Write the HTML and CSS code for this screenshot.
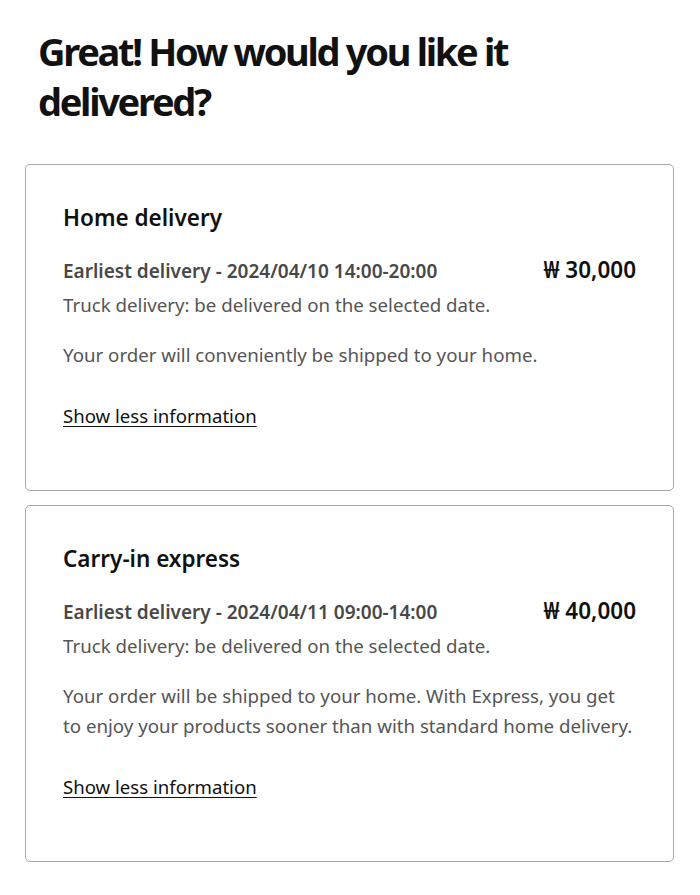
FILE: index.html
```html
<!DOCTYPE html>
<html>
<head>
<meta charset="utf-8">
<link rel="stylesheet" href="styles.css">
</head>
<body>
<main class="page">
  <h1 class="title">Great! How would you like it delivered?</h1>
  <section class="card">
    <h2 class="card-title">Home delivery</h2>
    <div class="row">
      <div class="earliest">Earliest delivery - 2024/04/10 14:00-20:00</div>
      <div class="price">₩ 30,000</div>
    </div>
    <p class="sub">Truck delivery: be delivered on the selected date.</p>
    <p class="desc">Your order will conveniently be shipped to your home.</p>
    <a class="link" href="#">Show less information</a>
  </section>
  <section class="card">
    <h2 class="card-title">Carry-in express</h2>
    <div class="row">
      <div class="earliest">Earliest delivery - 2024/04/11 09:00-14:00</div>
      <div class="price">₩ 40,000</div>
    </div>
    <p class="sub">Truck delivery: be delivered on the selected date.</p>
    <p class="desc">Your order will be shipped to your home. With Express, you get to enjoy your products sooner than with standard home delivery.</p>
    <a class="link" href="#">Show less information</a>
  </section>
</main>
</body>
</html>
```
FILE: styles.css
```css
html, body {
  margin: 0;
  padding: 0;
  background: #fff;
}
body {
  font-family: "Noto Sans", "Open Sans", sans-serif;
  color: #111;
}
.page {
  padding: 26px 26px 0 25px;
}
.title {
  margin: 0 0 38px 13px;
  font-size: 38px;
  line-height: 50px;
  font-weight: 700;
  letter-spacing: -2.3px;
  color: #111;
  max-width: 500px;
}
.card {
  border: 1px solid #a8a8a8;
  border-radius: 5px;
  padding: 37px 37px 59px 37px;
  margin-bottom: 14px;
}
.card-title {
  margin: 0 0 21px;
  font-size: 22.5px;
  line-height: 32px;
  font-weight: 600;
  color: #111;
}
.row {
  display: flex;
  justify-content: space-between;
  align-items: baseline;
}
.earliest {
  font-size: 19px;
  line-height: 30px;
  font-weight: 600;
  color: #484848;
}
.price {
  font-size: 22.5px;
  line-height: 30px;
  font-weight: 600;
  color: #111;
}
.sub, .desc {
  margin: 0;
  font-size: 18.7px;
  line-height: 30px;
  color: #555;
}
.sub {
  margin-top: 4px;
}
.desc {
  margin-top: 20px;
}
.link {
  display: inline-block;
  margin-top: 31px;
  font-size: 18.6px;
  line-height: 30px;
  color: #111;
  text-decoration: underline;
  text-underline-offset: 3px;
}
```
